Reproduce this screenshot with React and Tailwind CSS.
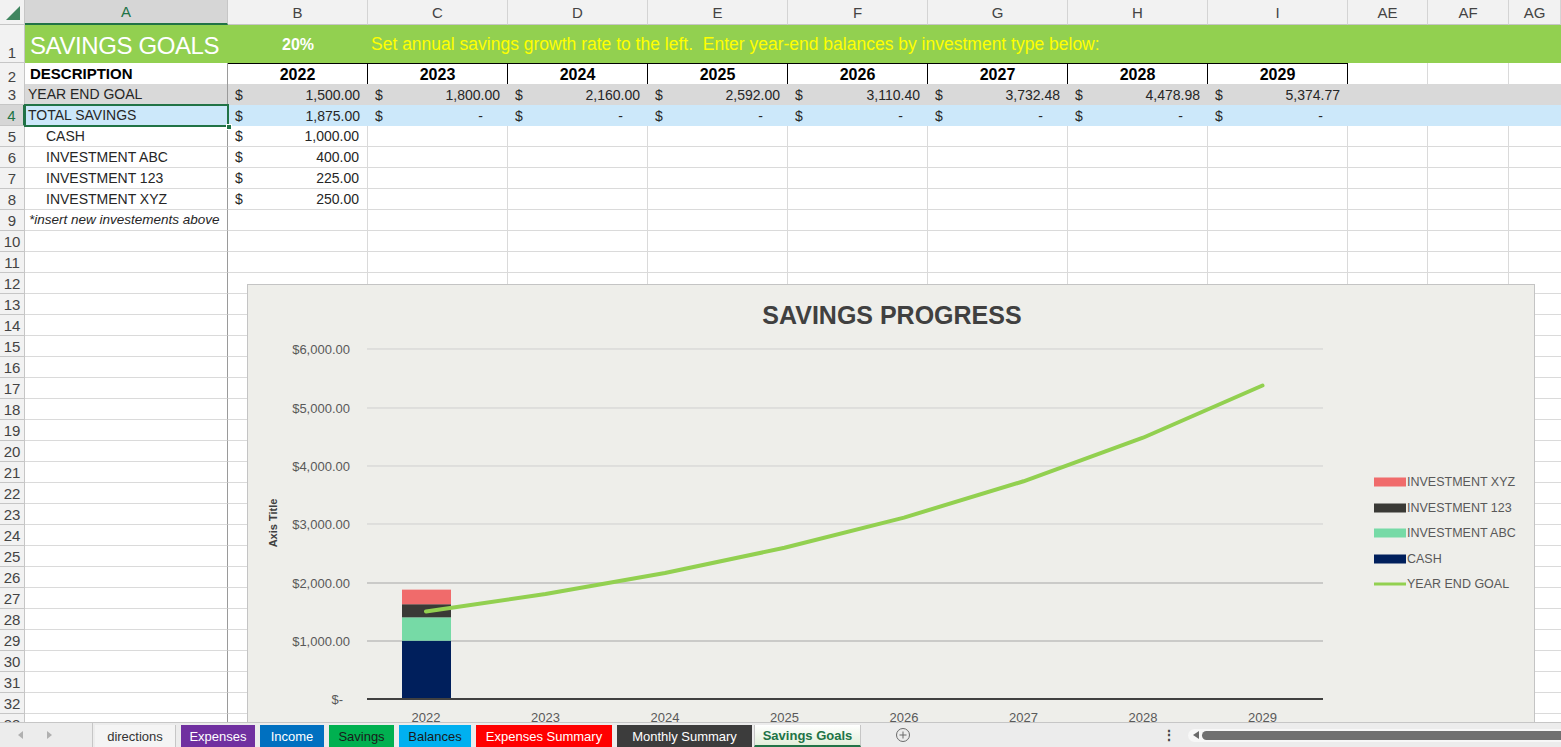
import React from "react";

const GRID = "grid grid-cols-[25px_203px_repeat(8,140px)_80px_81px_1fr]";
const COLS = ["A", "B", "C", "D", "E", "F", "G", "H", "I", "AE", "AF", "AG"];
const GOAL = ["1,500.00", "1,800.00", "2,160.00", "2,592.00", "3,110.40", "3,732.48", "4,478.98", "5,374.77"];
const YEARS = [2022, 2023, 2024, 2025, 2026, 2027, 2028, 2029];

function Acct({ v, dash }) {
  return (
    <div className="flex justify-between items-center h-full pl-[7px] pr-[8px] text-[14px] text-[#262626] leading-none">
      <span>$</span>
      <span className={dash ? "pr-[17px]" : ""}>{v}</span>
    </div>
  );
}

function RowHead({ n, selected, h }) {
  return (
    <div
      className={
        "flex items-end justify-center border-b border-r leading-none text-[15px] pb-[2px] " +
        (selected
          ? "bg-[#d6d6d6] text-[#217346] border-b-[#c6c6c6] border-r-[#217346] border-r-2"
          : "bg-[#f2f2f2] text-[#444444] border-[#c6c6c6]") +
        (h ? " " + h : "")
      }
    >
      {n}
    </div>
  );
}

function DataRow({ n }) {
  const sub = { 5: ["CASH", "1,000.00"], 6: ["INVESTMENT ABC", "400.00"], 7: ["INVESTMENT 123", "225.00"], 8: ["INVESTMENT XYZ", "250.00"] };
  if (n === 2) {
    return (
      <div className={GRID + " h-[21px]"}>
        <RowHead n={2} />
        <div className="border-r border-b border-r-[#9a9a9a] border-b-[#dadada] flex items-center pl-[5px] text-[15px] font-bold text-black">DESCRIPTION</div>
        {YEARS.map((y) => (
          <div key={y} className="border-t border-r border-black border-b border-b-[#dadada] flex items-center justify-center text-[16px] font-bold text-black leading-none">
            {y}
          </div>
        ))}
        <div className="border-r border-b border-[#dadada]" />
        <div className="border-r border-b border-[#dadada]" />
        <div className="border-b border-[#dadada]" />
      </div>
    );
  }
  if (n === 3) {
    return (
      <div className={GRID + " h-[21px]"}>
        <RowHead n={3} />
        <div className="bg-[#d9d9d9] border-r border-r-[#9a9a9a] flex items-center pl-[3px] text-[14px] text-[#262626]">YEAR END GOAL</div>
        {GOAL.map((g) => (
          <div key={g} className="bg-[#d9d9d9]">
            <Acct v={g} />
          </div>
        ))}
        <div className="bg-[#d9d9d9]" />
        <div className="bg-[#d9d9d9]" />
        <div className="bg-[#d9d9d9]" />
      </div>
    );
  }
  if (n === 4) {
    return (
      <div className={GRID + " h-[21px]"}>
        <RowHead n={4} selected />
        <div className="relative bg-[#cce8fa] flex items-center pl-[3px] text-[14px] text-[#262626]">
          TOTAL SAVINGS
          <div className="absolute -left-[1px] -top-[1px] -right-[1px] -bottom-[1px] border-2 border-[#217346]" />
          <div className="absolute -right-[4px] -bottom-[4px] w-[6px] h-[6px] bg-[#217346] border border-white" />
        </div>
        <div className="bg-[#cce8fa]">
          <Acct v="1,875.00" />
        </div>
        {[1, 2, 3, 4, 5, 6, 7].map((i) => (
          <div key={i} className="bg-[#cce8fa]">
            <Acct v="-" dash />
          </div>
        ))}
        <div className="bg-[#cce8fa]" />
        <div className="bg-[#cce8fa]" />
        <div className="bg-[#cce8fa]" />
      </div>
    );
  }
  const s = sub[n];
  return (
    <div className={GRID + " h-[21px]"}>
      <RowHead n={n} />
      <div className="border-r border-b border-r-[#9a9a9a] border-b-[#dadada] flex items-center leading-none whitespace-nowrap">
        {s ? <span className="pl-[21px] text-[14px] text-[#262626]">{s[0]}</span> : null}
        {n === 9 ? <span className="pl-[4px] text-[13.5px] italic text-[#262626]">*insert new investements above</span> : null}
      </div>
      <div className="border-r border-b border-[#dadada]">{s ? <Acct v={s[1]} /> : null}</div>
      {[1, 2, 3, 4, 5, 6, 7, 8, 9].map((i) => (
        <div key={i} className="border-r border-b border-[#dadada]" />
      ))}
      <div className="border-b border-[#dadada]" />
    </div>
  );
}

function Chart() {
  const gy = [64, 123, 181, 239, 298, 356];
  const labels = ["$6,000.00", "$5,000.00", "$4,000.00", "$3,000.00", "$2,000.00", "$1,000.00"];
  const vals = [1500, 1800, 2160, 2592, 3110.4, 3732.48, 4478.98, 5374.77];
  const xc = (i) => 178 + i * 119.5;
  const yv = (v) => 414 - v * 0.05833;
  const pts = vals.map((v, i) => `${xc(i)},${yv(v)}`).join(" ");
  const font = "Liberation Sans, Arial, sans-serif";
  const legend = [
    ["INVESTMENT XYZ", "#f06b6b", 197],
    ["INVESTMENT 123", "#3a3a36", 223],
    ["INVESTMENT ABC", "#76daa6", 248],
    ["CASH", "#001f5c", 274],
  ];
  return (
    <div className="absolute left-[247px] top-[284px] w-[1288px] h-[450px] bg-[#eeeeea] border border-[#c4c4c4]">
      <svg width="1288" height="450" className="block" fontFamily={font}>
        <text x="644" y="30" textAnchor="middle" dominantBaseline="central" fontSize="25" fontWeight="bold" fill="#404040">
          SAVINGS PROGRESS
        </text>
        <text x="0" y="0" transform="translate(25,238) rotate(-90)" textAnchor="middle" dominantBaseline="central" fontSize="11" fontWeight="bold" fill="#404040">
          Axis Title
        </text>
        {gy.map((y, i) => (
          <g key={y}>
            <line x1="119" x2="1075" y1={y} y2={y} stroke={i >= 4 ? "#a6a6a6" : "#cfcfcf"} strokeWidth="1" />
            <text x="102" y={y} textAnchor="end" dominantBaseline="central" fontSize="13" fill="#595959">
              {labels[i]}
            </text>
          </g>
        ))}
        <text x="95" y="414" textAnchor="end" dominantBaseline="central" fontSize="13" fill="#595959">
          $-
        </text>
        <rect x="154" y={414 - 58.33} width="49" height="58.33" fill="#001f5c" />
        <rect x="154" y={414 - 58.33 - 23.33} width="49" height="23.33" fill="#76daa6" />
        <rect x="154" y={414 - 81.66 - 13.12} width="49" height="13.12" fill="#3a3a36" />
        <rect x="154" y={414 - 94.78 - 14.58} width="49" height="14.58" fill="#f06b6b" />
        <line x1="119" x2="1075" y1="414" y2="414" stroke="#404040" strokeWidth="2" />
        <polyline points={pts} fill="none" stroke="#92d050" strokeWidth="4" strokeLinecap="round" strokeLinejoin="round" />
        {YEARS.map((y, i) => (
          <text key={y} x={xc(i)} y="432" textAnchor="middle" dominantBaseline="central" fontSize="13" fill="#595959">
            {y}
          </text>
        ))}
        {legend.map(([t, c, y]) => (
          <g key={t}>
            <rect x="1126" y={y - 4.5} width="32" height="9" fill={c} />
            <text x="1159" y={y} dominantBaseline="central" fontSize="12.5" fill="#595959">
              {t}
            </text>
          </g>
        ))}
        <rect x="1126" y={299 - 1.5} width="32" height="3" fill="#92d050" />
        <text x="1159" y="299" dominantBaseline="central" fontSize="12.5" fill="#595959">
          YEAR END GOAL
        </text>
      </svg>
    </div>
  );
}

function Tab({ label, w, cls }) {
  return (
    <div className={"h-full flex items-center justify-center text-[13px] leading-none shrink-0 " + w + " " + cls}>{label}</div>
  );
}

export default function App() {
  const rows = [];
  for (let n = 2; n <= 33; n++) rows.push(<DataRow key={n} n={n} />);
  return (
    <div className="w-[1561px] h-[747px] overflow-hidden bg-white flex flex-col font-['Liberation_Sans',Arial,sans-serif]">
      <div className="relative h-[722px] overflow-hidden shrink-0">
        {/* column headers */}
        <div className={GRID + " h-[25px]"}>
          <div className="bg-[#f2f2f2] border-r border-b border-[#c6c6c6] relative">
            <svg width="16" height="16" className="absolute right-[3px] bottom-[3px]">
              <polygon points="15,1 15,15 1,15" fill="#217346" opacity="0.85" />
            </svg>
          </div>
          {COLS.map((c) => (
            <div
              key={c}
              className={
                "flex items-center justify-center text-[15px] leading-none " +
                (c === "A"
                  ? "bg-[#d6d6d6] text-[#217346] border-b-2 border-b-[#217346] border-r border-r-[#c6c6c6]"
                  : "bg-[#f2f2f2] text-[#444444] border-r border-b border-[#d4d4d4] border-b-[#c6c6c6]")
              }
            >
              {c}
            </div>
          ))}
        </div>
        {/* row 1 */}
        <div className={GRID + " h-[38px] overflow-hidden"}>
          <RowHead n={1} />
          <div className="bg-[#92d050] flex items-end pl-[5px] pb-[5px] text-[24px] tracking-[-0.4px] text-white leading-none whitespace-nowrap overflow-hidden">
            SAVINGS GOALS
          </div>
          <div className="bg-[#92d050] flex items-center justify-center pt-[1px] text-[16px] font-bold text-white leading-none">20%</div>
          <div className="col-span-10 bg-[#92d050] flex items-center pl-[3px] pt-[2px] text-[17.5px] text-[#ffff00] whitespace-pre leading-none overflow-hidden">
            {"Set annual savings growth rate to the left.  Enter year-end balances by investment type below:"}
          </div>
        </div>
        {rows}
        <Chart />
      </div>
      {/* tab bar */}
      <div className="h-[25px] flex items-stretch bg-[#ececec] border-t border-[#c6c6c6] text-[#333]">
        <div className="w-[93px] flex items-center shrink-0 border-r border-[#c6c6c6]">
          <svg width="8" height="10" className="ml-[17px]">
            <polygon points="6,1 6,9 1,5" fill="#b0b0b0" />
          </svg>
          <svg width="8" height="10" className="ml-[20px]">
            <polygon points="2,1 2,9 7,5" fill="#b0b0b0" />
          </svg>
        </div>
        <div className="flex items-end gap-[5px] pl-[2px] pt-[2px]">
          <Tab label="directions" w="w-[81px]" cls="bg-[#f4f4f4] text-[#333] border-r border-[#c6c6c6]" />
          <Tab label="Expenses" w="w-[74px]" cls="bg-[#7030a0] text-white" />
          <Tab label="Income" w="w-[64px]" cls="bg-[#0070c0] text-white" />
          <Tab label="Savings" w="w-[65px]" cls="bg-[#00b050] text-[#1a1a1a]" />
          <Tab label="Balances" w="w-[72px]" cls="bg-[#00b0f0] text-[#1a1a1a]" />
          <Tab label="Expenses Summary" w="w-[136px]" cls="bg-[#ff0000] text-white" />
          <Tab label="Monthly Summary" w="w-[135px]" cls="bg-[#3c3c3c] text-white -mr-[3px]" />
          <Tab
            label="Savings Goals"
            w="w-[107px]"
            cls="bg-gradient-to-b from-white to-[#e2efda] text-[#217346] font-bold border-b-2 border-[#217346] border-l border-l-[#c6c6c6] border-r border-r-[#c6c6c6]"
          />
        </div>
        <div className="flex items-center ml-[34px]">
          <svg width="16" height="16">
            <circle cx="8" cy="8" r="6.5" fill="none" stroke="#6a6a6a" strokeWidth="1" />
            <line x1="8" y1="4.5" x2="8" y2="11.5" stroke="#6a6a6a" strokeWidth="1" />
            <line x1="4.5" y1="8" x2="11.5" y2="8" stroke="#6a6a6a" strokeWidth="1" />
          </svg>
        </div>
        <div className="flex items-center ml-[251px] text-[14px] font-bold text-[#444] leading-none">⋮</div>
        <div className="flex-1 flex items-center ml-[12px]">
          <div className="flex-1 h-[13px] bg-[#f7f7f7] rounded-l-full flex items-center pl-[4px]">
            <svg width="8" height="8">
              <polygon points="7,0 7,8 1,4" fill="#6a6a6a" />
            </svg>
            <div className="flex-1 h-[9px] ml-[2px] bg-[#707070] rounded-l-full" />
          </div>
        </div>
      </div>
    </div>
  );
}
